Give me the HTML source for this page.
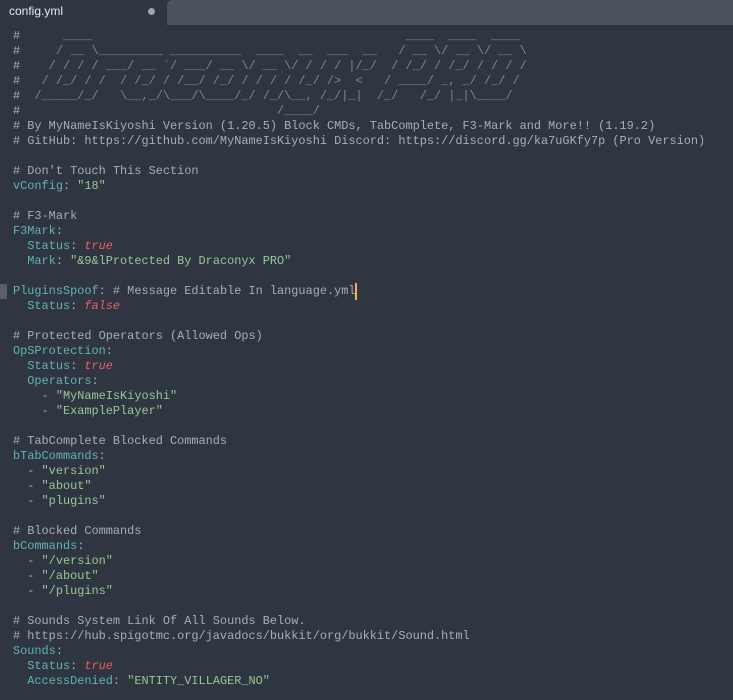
<!DOCTYPE html>
<html><head><meta charset="utf-8"><style>
html,body{margin:0;padding:0;width:733px;height:700px;overflow:hidden;background:#303641;}
.tabbar{position:absolute;left:0;top:0;width:733px;height:25px;background:#303641;}
.tabrest{position:absolute;left:167px;top:0;width:566px;height:25px;background:#4d535d;border-top-left-radius:5px;}
.tab{position:absolute;left:9px;top:4px;font:12px "Liberation Sans",sans-serif;color:#e8eaee;}
.dot{position:absolute;left:148px;top:8px;width:7px;height:7px;border-radius:50%;background:#a0a5ad;}
pre{position:absolute;left:13px;top:29px;margin:0;font:11.9px/15px "Liberation Mono",monospace;color:#a7adba;white-space:pre;}
.k{color:#5fb4b4}.s{color:#99c794}.t{color:#ec5f67;font-style:italic}.c{color:#a7adba}.a{color:#7f8792}
.hl{position:absolute;left:0;top:284px;width:7px;height:15px;background:#5a606a;}
.cur{position:absolute;left:355px;top:283px;width:2px;height:17px;background:#f9ae58;}
</style></head><body>
<div class="tabbar"></div><div class="tabrest"></div>
<div class="tab">config.yml</div><div class="dot"></div>
<div class="hl"></div><div class="cur"></div>
<pre><span class="c">#</span><span class="a">      ____                                            ____  ____  ____</span>
<span class="c">#</span><span class="a">     / __ \_________ __________  ____  __  ___  __   / __ \/ __ \/ __ \</span>
<span class="c">#</span><span class="a">    / / / / ___/ __ `/ ___/ __ \/ __ \/ / / / |/_/  / /_/ / /_/ / / / /</span>
<span class="c">#</span><span class="a">   / /_/ / /  / /_/ / /__/ /_/ / / / / /_/ />  <   / ____/ _, _/ /_/ /</span>
<span class="c">#</span><span class="a">  /_____/_/   \__,_/\___/\____/_/ /_/\__, /_/|_|  /_/   /_/ |_|\____/</span>
<span class="c">#</span><span class="a">                                    /____/</span>
# By MyNameIsKiyoshi Version (1.20.5) Block CMDs, TabComplete, F3-Mark and More!! (1.19.2)
# GitHub: https://github.com/MyNameIsKiyoshi Discord: https://discord.gg/ka7uGKfy7p (Pro Version)

# Don't Touch This Section
<span class="k">vConfig</span>: <span class="s">"18"</span>

# F3-Mark
<span class="k">F3Mark</span>:
  <span class="k">Status</span>: <span class="t">true</span>
  <span class="k">Mark</span>: <span class="s">"&amp;9&amp;lProtected By Draconyx PRO"</span>

<span class="k">PluginsSpoof</span>: # Message Editable In language.yml
  <span class="k">Status</span>: <span class="t">false</span>

# Protected Operators (Allowed Ops)
<span class="k">OpSProtection</span>:
  <span class="k">Status</span>: <span class="t">true</span>
  <span class="k">Operators</span>:
    - <span class="s">"MyNameIsKiyoshi"</span>
    - <span class="s">"ExamplePlayer"</span>

# TabComplete Blocked Commands
<span class="k">bTabCommands</span>:
  - <span class="s">"version"</span>
  - <span class="s">"about"</span>
  - <span class="s">"plugins"</span>

# Blocked Commands
<span class="k">bCommands</span>:
  - <span class="s">"/version"</span>
  - <span class="s">"/about"</span>
  - <span class="s">"/plugins"</span>

# Sounds System Link Of All Sounds Below.
# https://hub.spigotmc.org/javadocs/bukkit/org/bukkit/Sound.html
<span class="k">Sounds</span>:
  <span class="k">Status</span>: <span class="t">true</span>
  <span class="k">AccessDenied</span>: <span class="s">"ENTITY_VILLAGER_NO"</span></pre>
</body></html>
